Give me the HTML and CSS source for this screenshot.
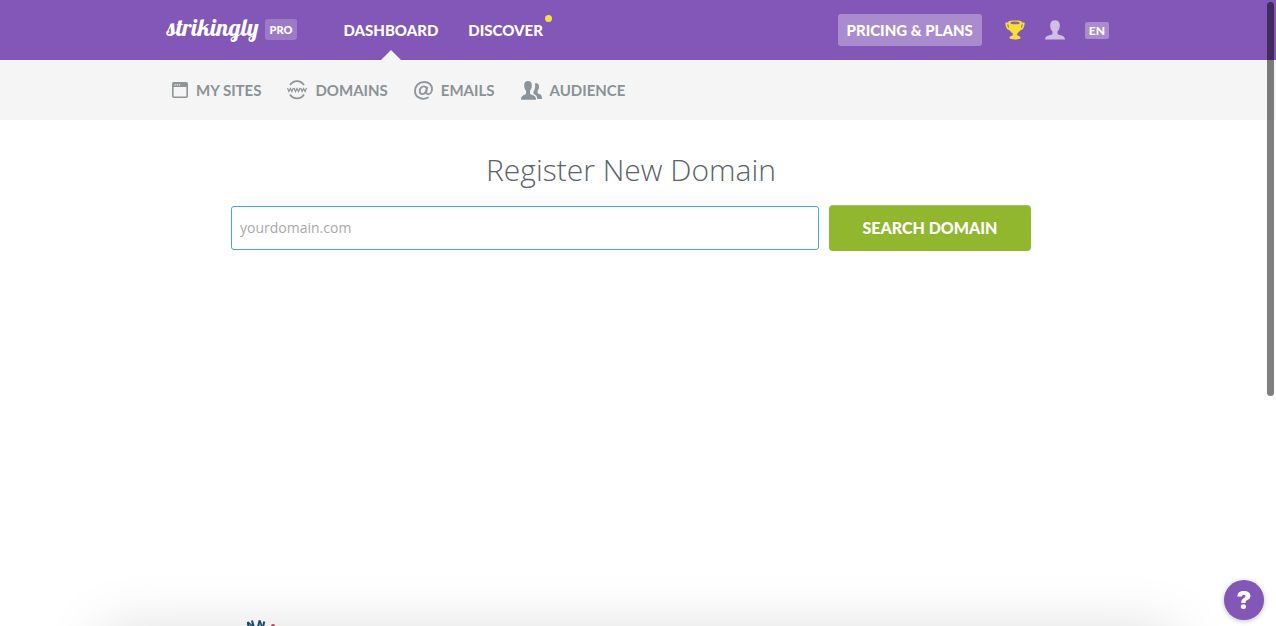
FILE: index.html
```html
<!DOCTYPE html>
<html lang="en">
<head>
  <meta charset="UTF-8" />
  <meta name="viewport" content="width=device-width, initial-scale=1.0" />
  <title>Register New Domain - Strikingly</title>
  <link rel="stylesheet" href="styles.css">
</head>
<body>
  <header class="topbar">
    <div class="container">
      <a href="#" class="logo">strikingly</a>
      <span class="badge">PRO</span>
      <nav class="main-nav">
        <a href="#" class="active">DASHBOARD</a>
        <a href="#" class="discover">DISCOVER</a>
      </nav>
      <div class="account">
        <a href="#" class="pricing">PRICING &amp; PLANS</a>
        <a href="#" class="icon-link" aria-label="Rewards">
          <svg width="20" height="20" viewBox="0 0 20 20">
            <path d="M4 3.500H1.300c0 3.500 1.800 6 5.200 6.600M16 3.500h2.700c0 3.500-1.800 6-5.200 6.600" fill="none" stroke="#f6df3a" stroke-width="1.800" />
            <path d="M3.300 1.800C3.300.2 16.700.2 16.700 1.800c0 6-1.300 10-4.600 11.700l.3 2c2 .3 3.200 1.200 3.200 2.600 0 1.900-11.200 1.900-11.200 0 0-1.400 1.200-2.300 3.200-2.600l.3-2C4.600 11.800 3.300 7.800 3.300 1.800z" fill="#f6df3a" />
            <ellipse cx="10" cy="2.900" rx="4.600" ry="1.300" fill="#8f6a86" />
          </svg>
        </a>
        <a href="#" class="icon-link" aria-label="Account">
          <svg width="20" height="20" viewBox="0 0 20 20">
            <path d="M10 .3c3.200 0 4.900 2 4.800 5 0 2.800-.8 4.900-2.300 6.200v1.700c0 .8.700 1.300 2.200 1.700 3.500.9 5 1.700 5.300 4.600H0c.3-2.900 1.800-3.700 5.300-4.600 1.500-.4 2.200-.9 2.200-1.700v-1.700C6 10.200 5.200 8.100 5.200 5.300 5.100 2.300 6.800.3 10 .3z" fill="#d0bee5" />
          </svg>
        </a>
        <button class="lang">EN</button>
      </div>
    </div>
  </header>

  <nav class="subnav">
    <div class="container">
      <a href="#">
        <svg width="16" height="16" viewBox="0 0 16 16">
          <rect x=".8" y=".8" width="14.400" height="14.400" rx="1" fill="none" stroke="#8f9497" stroke-width="1.600" />
          <path d="M1 1h14v4H1z" fill="#8f9497" />
          <path d="M2.500 2.300h1.200v1.200H2.500zM4.700 2.300h1.200v1.200H4.700zM6.900 2.300h1.200v1.200H6.900z" fill="#f5f5f5" />
        </svg>
        MY SITES
      </a>
      <a href="#">
        <svg width="20" height="20" viewBox="0 0 20 20" fill="none" stroke="#8f9497">
          <path d="M3 5C6.500-.2 13.500-.2 17 5M3 14.500c3.500 5.200 10.500 5.200 14 0" stroke-width="1.800" />
          <path d="M.5 8l1.400 3.500L3.400 8.500l1.500 3L6.300 8M7.100 8l1.400 3.500 1.500-3 1.500 3L12.900 8M13.700 8l1.400 3.500 1.500-3 1.500 3L19.500 8" stroke-width="1.200" />
        </svg>
        DOMAINS
      </a>
      <a href="#">
        <svg width="19" height="19" viewBox="0 0 19 19" fill="none" stroke="#8f979c" stroke-width="1.900">
          <path d="M14.600 16.200C8.500 20 1 16.500 1 10 1 4.800 5 1 10.300 1c4.600 0 7.700 3 7.700 6.900 0 3.200-1.700 5.300-3.900 5.300-1.500 0-2.100-.9-1.800-2.400l1-5" />
          <path d="M12.700 7.900c-.4-1.700-1.500-2.500-2.900-2.500-2.400 0-4.100 2.200-4.100 4.700 0 1.800.9 3 2.500 3 2 0 3.600-1.900 4.200-4.200" />
        </svg>
        EMAILS
      </a>
      <a href="#">
        <svg width="21" height="19" viewBox="0 0 21 19" fill="#8b949a">
          <path d="M14 2.400c2.400-.9 4.300.7 4 3.500-.1 1.700-.6 2.900-1.400 3.600v2c0 .8.700 1.100 1.700 1.500 1.900.7 2.600 1.400 2.700 5h-4.700c-.2-3-1.200-4-3.800-5.100v-2.400c1.400-1.800 2.100-4.800 1.500-8.100z" />
          <path d="M7 0c2.800 0 4 1.900 3.800 4.700-.1 2.300-.8 3.900-1.800 5v2.500c0 .8.800 1.200 2.200 1.700 2.900 1 3.800 1.800 3.900 4.900H0c.1-3.100.7-3.900 3.100-4.900 1.300-.5 1.900-.9 1.900-1.700V9.700C4 8.600 3.300 7 3.200 4.700 3 1.900 4.200 0 7 0z" />
        </svg>
        AUDIENCE
      </a>
    </div>
  </nav>

  <main>
    <h1><label for="domain">Register New Domain</label></h1>
    <form class="domain-form">
      <input type="text" id="domain" placeholder="yourdomain.com" />
      <button type="submit">SEARCH DOMAIN</button>
    </form>
  </main>

  <div class="panel-shadow"></div>
  <svg class="stamp" width="32" height="6" viewBox="0 0 32 6">
    <text x="0" y="8" transform="rotate(-16 5 5)">N</text>
    <text x="10" y="8" transform="rotate(14 14 5)">N</text>
    <circle cx="26" cy="6" r="2" fill="#a8485a" />
  </svg>

  <button class="help" aria-label="Help">?</button>
  <div class="scroll-thumb"></div>
</body>
</html>
```

FILE: styles.css
```css
* {
  box-sizing: border-box;
}

body {
  font-family: "Open Sans", sans-serif;
  margin: 0;
  min-height: 100vh;
  background: #fff;
  overflow: hidden;
}

a {
  text-decoration: none;
}

button {
  border: none;
  cursor: pointer;
}

.container {
  display: flex;
  align-items: center;
  width: 90%;
  max-width: 942px;
  height: 60px;
  margin: 0 auto;
  font-family: Lato, sans-serif;
  font-weight: 900;
  font-size: 15px;
}

.topbar {
  background: #8357b7;
}

.logo {
  font-family: Lobster, "Liberation Serif", serif;
  font-weight: normal;
  font-size: 24px;
  line-height: 28px;
  padding-bottom: 6px;
  color: #fff;
}

.badge {
  margin: 0 0 2px 6px;
  padding: 0 5px;
  font-size: 11px;
  line-height: 21px;
  border-radius: 3px;
  background: #9d7ac7;
  color: #fff;
}

.main-nav {
  display: flex;
  gap: 30px;
  margin-left: 46px;
}

.main-nav a {
  position: relative;
  line-height: 60px;
  color: #fff;
}

.main-nav .active::after {
  content: "";
  position: absolute;
  bottom: 0;
  left: 50%;
  margin-left: -10px;
  border: 10px solid transparent;
  border-top: none;
  border-bottom-color: #f5f5f5;
}

.discover::after {
  content: "";
  position: absolute;
  top: 15px;
  right: -9px;
  width: 7px;
  height: 7px;
  border-radius: 50%;
  background: #f6df4e;
}

.account {
  display: flex;
  align-items: center;
  gap: 20px;
  margin-left: auto;
}

.pricing {
  padding: 0 9px;
  margin-right: 3px;
  line-height: 32px;
  border-radius: 3px;
  background: #a98bce;
  color: #fff;
}

.icon-link {
  display: flex;
}

.lang {
  padding: 0 4px;
  font: 900 12px/17px Lato, sans-serif;
  border-radius: 2px;
  background: #a98bce;
  color: #fff;
}

.subnav {
  background: #f5f5f5;
}

.subnav .container {
  gap: 26px;
  padding-left: 5px;
  font-weight: 700;
}

.subnav a {
  display: flex;
  align-items: center;
  gap: 8px;
  color: #8b9296;
}

main {
  padding: 24px 14px 0 0;
}

h1 {
  margin: 0 0 9px;
  text-align: center;
  font-weight: 300;
  font-size: 30px;
  line-height: 52px;
  color: #5b636b;
}

.domain-form {
  display: flex;
  align-items: center;
  gap: 10px;
  width: 90%;
  max-width: 800px;
  margin: 0 auto;
}

.domain-form input {
  flex: 1;
  height: 44px;
  padding: 0 8px 2px;
  border: 1px solid #4ba8c4;
  border-radius: 3px;
  outline: none;
  font: 14px "Open Sans", sans-serif;
}

.domain-form input::placeholder {
  color: #a9a9a9;
}

.domain-form button {
  width: 202px;
  height: 46px;
  padding-bottom: 3px;
  border-top: 1px solid #a5c65a;
  border-radius: 4px;
  background: #91b72f;
  color: #fff;
  font: 900 16px Lato, sans-serif;
}

.panel-shadow {
  position: fixed;
  top: 100%;
  left: 8%;
  right: 8%;
  height: 100px;
  box-shadow: 0 6px 60px rgba(0, 0, 0, 0.15);
}

.stamp {
  position: fixed;
  bottom: 0;
  left: 247px;
  font: 900 10px Inter, sans-serif;
  fill: #174a68;
}

.help {
  position: fixed;
  right: 12px;
  bottom: 6px;
  width: 40px;
  height: 40px;
  padding: 0;
  border-radius: 50%;
  background: #8357b7;
  box-shadow: 0 1px 5px rgba(0, 0, 0, 0.25);
  color: #fff;
  font: 900 25px/38px Inter, sans-serif;
}

.scroll-thumb {
  position: fixed;
  top: 2px;
  right: 2px;
  width: 7px;
  height: 63%;
  border-radius: 4px;
  background: rgba(0, 0, 0, 0.5);
}
```
